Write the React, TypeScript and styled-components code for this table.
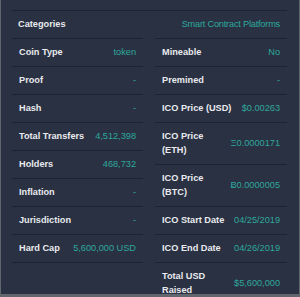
import styled, { createGlobalStyle } from "styled-components";

const GlobalStyle = createGlobalStyle`
  html, body {
    margin: 0;
    padding: 0;
    background: #62676e;
  }
  * {
    box-sizing: border-box;
  }
`;

type Item = { label: React.ReactNode; value: string };

const leftItems: Item[] = [
  { label: "Coin Type", value: "token" },
  { label: "Proof", value: "-" },
  { label: "Hash", value: "-" },
  { label: "Total Transfers", value: "4,512,398" },
  { label: "Holders", value: "468,732" },
  { label: "Inflation", value: "-" },
  { label: "Jurisdiction", value: "-" },
  { label: "Hard Cap", value: "5,600,000 USD" },
];

const rightItems: Item[] = [
  { label: "Mineable", value: "No" },
  { label: "Premined", value: "-" },
  { label: "ICO Price (USD)", value: "$0.00263" },
  {
    label: (
      <>
        ICO Price
        <br />
        (ETH)
      </>
    ),
    value: "Ξ0.0000171",
  },
  {
    label: (
      <>
        ICO Price
        <br />
        (BTC)
      </>
    ),
    value: "Ƀ0.0000005",
  },
  { label: "ICO Start Date", value: "04/25/2019" },
  { label: "ICO End Date", value: "04/26/2019" },
  {
    label: (
      <>
        Total USD
        <br />
        Raised
      </>
    ),
    value: "$5,600,000",
  },
];

const App = () => {
  return (
    <>
      <GlobalStyle />
      <Panel>
        <HeaderRow>
          <Label>Categories</Label>
          <Value $narrow>Smart Contract Platforms</Value>
        </HeaderRow>
        <Columns>
          <Column $closed>
            {leftItems.map((item, i) => (
              <Row key={i}>
                <Label>{item.label}</Label>
                <Value>{item.value}</Value>
              </Row>
            ))}
          </Column>
          <Column>
            {rightItems.map((item, i) => (
              <Row key={i}>
                <Label>{item.label}</Label>
                <Value>{item.value}</Value>
              </Row>
            ))}
          </Column>
        </Columns>
      </Panel>
    </>
  );
};

export default App;

const Panel = styled.div`
  width: 298px;
  height: 294px;
  margin-left: 1px;
  overflow: hidden;
  background-color: #2a3142;
  padding: 10px 12px 0 11px;
  font-family: "Liberation Sans", Arial, "DejaVu Sans", sans-serif;
  font-size: 9.2px;
  line-height: 14px;
`;

const HeaderRow = styled.div`
  display: flex;
  justify-content: space-between;
  align-items: center;
  border-top: 1px solid #1d2330;
  padding: 6px 7px 7px 6px;
`;

const Columns = styled.div`
  display: grid;
  grid-template-columns: 131px 1fr;
  column-gap: 12px;
`;

const Column = styled.div<{ $closed?: boolean }>`
  display: flex;
  flex-direction: column;
  align-self: start;
  border-bottom: ${({ $closed }) => ($closed ? "1px solid #1d2330" : "none")};
`;

const Row = styled.div`
  display: flex;
  justify-content: space-between;
  align-items: center;
  gap: 6px;
  border-top: 1px solid #1d2330;
  padding: 6px 7px 7px 7px;
`;

const Label = styled.span`
  color: #e8eaee;
  font-weight: 700;
  white-space: nowrap;
`;

const Value = styled.span<{ $narrow?: boolean }>`
  color: #2ea89e;
  text-align: right;
  white-space: nowrap;
  letter-spacing: ${({ $narrow }) => ($narrow ? "-0.2px" : "0")};
`;
